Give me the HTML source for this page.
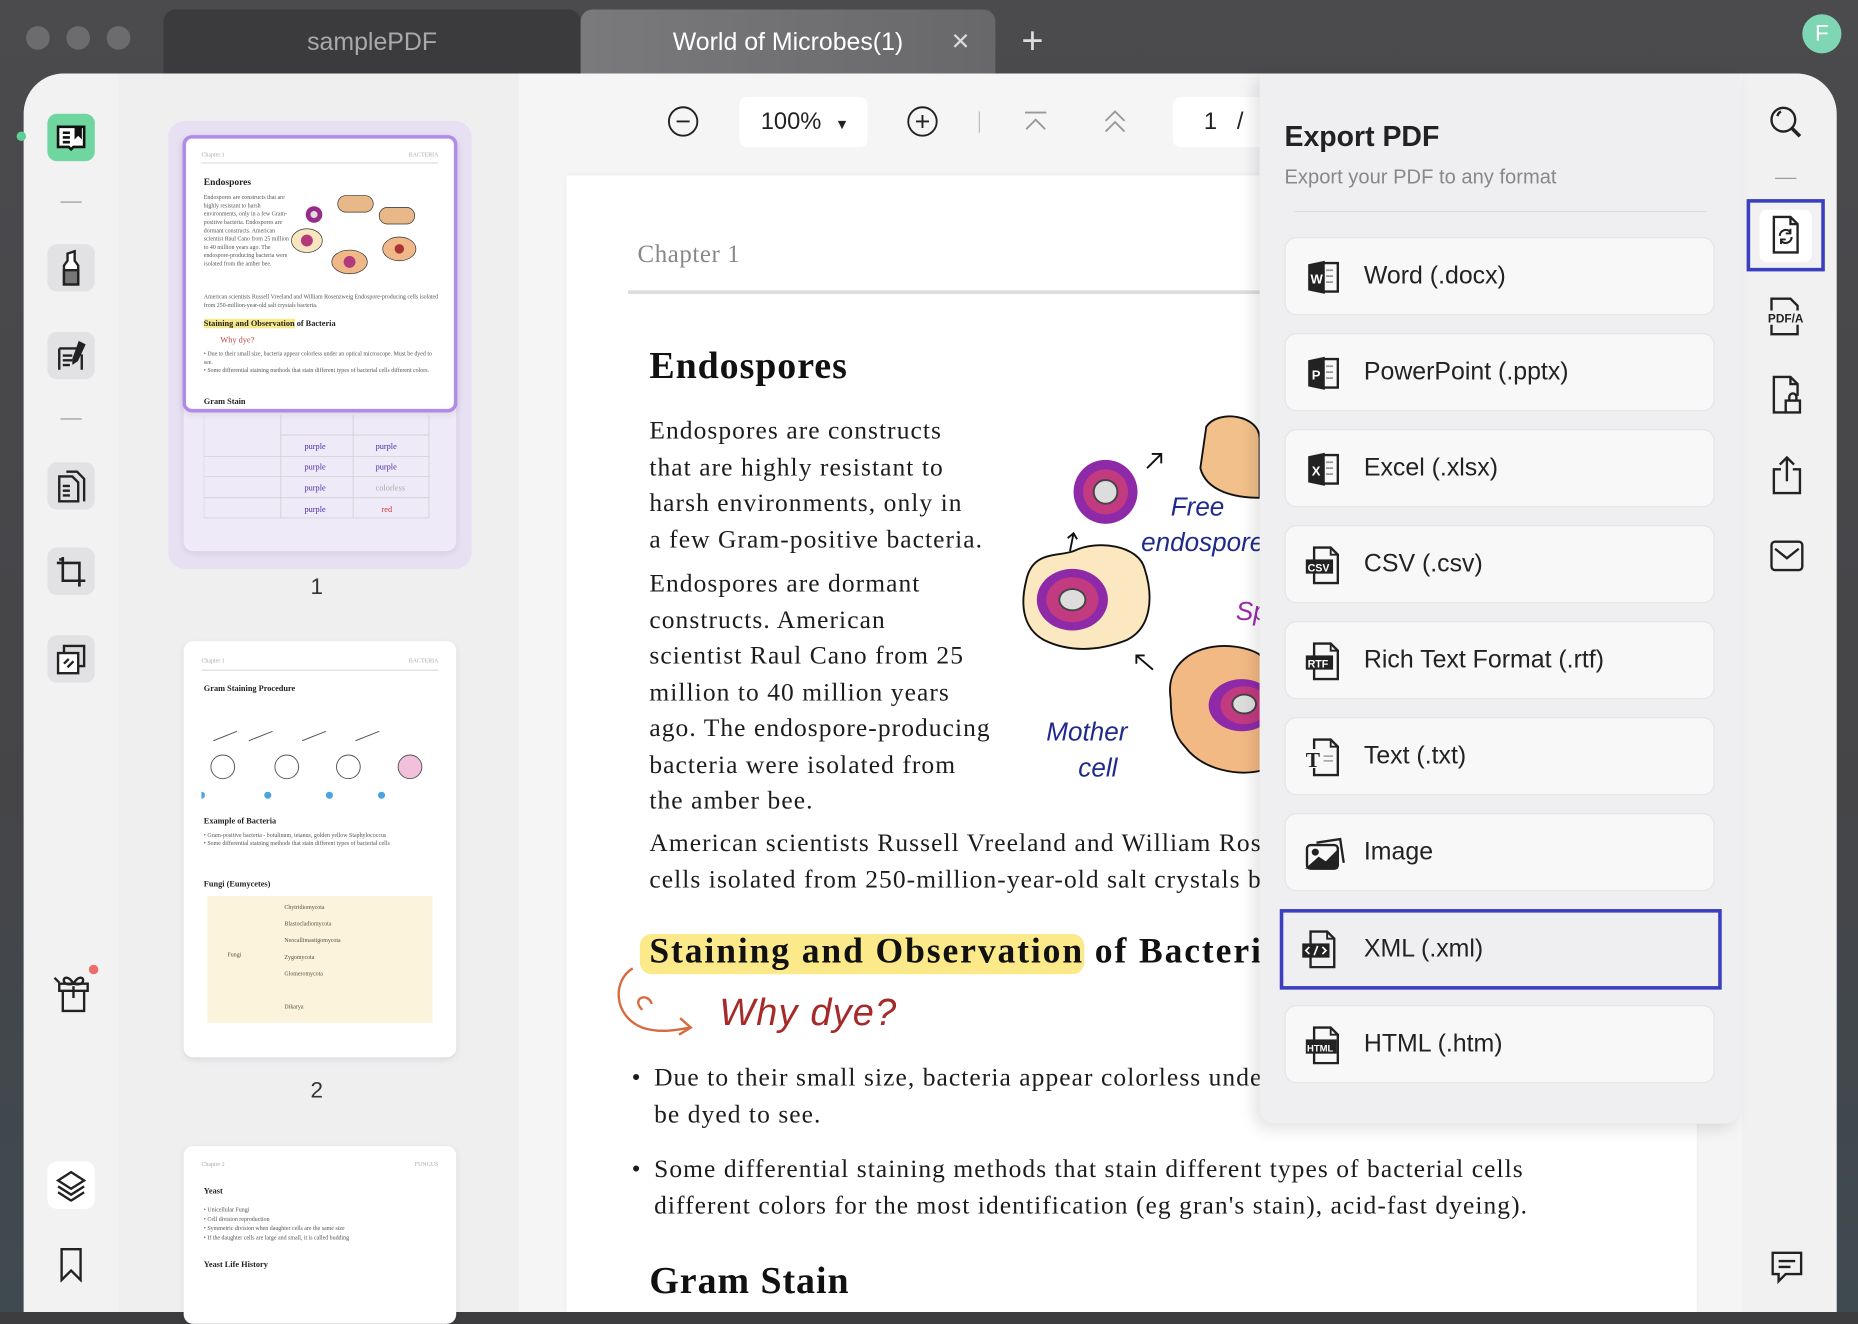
<!DOCTYPE html>
<html><head><meta charset="utf-8"><style>
*{margin:0;padding:0;box-sizing:border-box}
html,body{width:1858px;height:1312px;overflow:hidden;background:#3d3d40}
#w{position:absolute;left:0;top:0;width:1568px;height:1107px;transform:scale(1.18495,1.1852);transform-origin:0 0;font-family:"Liberation Sans",sans-serif;background:linear-gradient(180deg,#4b4a4d 0%,#454548 60%,#3f4a50 100%)}
.a{position:absolute}
.serif{font-family:"Liberation Serif",serif}
.tl{width:20px;height:20px;border-radius:50%;background:#6c6b6e;top:22px}
.ic{position:absolute;width:40px;height:40px;border-radius:8px;background:#e2e2e4;display:flex;align-items:center;justify-content:center}
.btn{position:absolute;left:1084px;width:363px;height:66px;background:#f8f8f9;border:1px solid #e4e3e5;border-radius:10px;font-size:21px;color:#222;line-height:64px;padding-left:66px}
.btn svg{position:absolute;left:16px;top:16px}
.p{position:absolute;left:548px;font-size:21.5px;color:#1c1c1c;line-height:30.5px;font-family:"Liberation Serif",serif;letter-spacing:0.9px}
.thumb{position:absolute;background:#fff;border-radius:8px;box-shadow:0 2px 6px rgba(0,0,0,.08);overflow:hidden}
.tx{position:absolute;font-size:5px;color:#555;font-family:"Liberation Serif",serif;line-height:7px}
.rs{position:absolute;left:1492px}
</style></head><body><div id="w">
<div class="a tl" style="left:22px"></div><div class="a tl" style="left:56px"></div><div class="a tl" style="left:90px"></div>
<div class="a" style="left:138px;top:8px;width:352px;height:60px;background:#3b3b3d;border-radius:10px 10px 0 0"></div>
<div class="a" style="left:138px;top:24px;width:352px;text-align:center;color:#a9a9ab;font-size:21px">samplePDF</div>
<div class="a" style="left:490px;top:8px;width:350px;height:60px;background:linear-gradient(90deg,#7a7a7c,#68686a);border-radius:10px 10px 0 0"></div>
<div class="a" style="left:490px;top:24px;width:350px;text-align:center;color:#fff;font-size:21px">World of Microbes(1)</div>
<div class="a" style="left:803px;top:19px;color:#ddd;font-size:26px;font-weight:300">×</div>
<div class="a" style="left:862px;top:16px;color:#ddd;font-size:32px;font-weight:300">+</div>
<div class="a" style="left:1521px;top:12px;width:33px;height:33px;border-radius:50%;background:#7ed6b4;color:#fff;text-align:center;line-height:33px;font-size:19px">F</div>
<div class="a" style="left:20px;top:62px;width:1530px;height:1045px;background:#f5f5f6;border-radius:34px 34px 0 0;overflow:hidden">
 <div class="a" style="left:0;top:0;width:80px;height:1045px;background:#f2f2f3"></div>
 <div class="a" style="left:80px;top:0;width:338px;height:1045px;background:#efeff0"></div>
 <div class="a" style="left:1450px;top:0;width:80px;height:1045px;background:#f1f1f2"></div>
</div>
<div class="a" style="left:14px;top:111px;width:8px;height:8px;border-radius:50%;background:#5ccf94"></div>
<div class="ic" style="left:40px;top:96px;background:#6fd6a0"><svg width="30" height="30" viewBox="0 0 30 30" fill="none" stroke="#111" stroke-width="2.2"><path d="M4 6h22v17H17l-2 2-2-2H4z" fill="#fff"/><path d="M8 11h6M8 15h6M8 19h6"/><path d="M19 6v8l2-2 2 2V6" fill="#111"/></svg></div>
<div class="a" style="left:51px;top:170px;width:18px;height:1px;background:#999"></div>
<div class="ic" style="left:40px;top:206px"><svg width="28" height="32" viewBox="0 0 28 32" fill="none" stroke="#222" stroke-width="2"><path d="M11 4l6-2v8l3 4v16H8V14l3-4z" fill="#fff"/><path d="M8 18h12v12H8z" fill="#777"/></svg></div>
<div class="ic" style="left:40px;top:280px"><svg width="30" height="30" viewBox="0 0 30 30" fill="none" stroke="#222" stroke-width="2"><path d="M5 9h15M5 9v18M8 15h8M8 19h8M8 23h6"/><path d="M22 4l4 2-6 13-3 2 0-3z" fill="#222"/><path d="M24 14v13"/></svg></div>
<div class="a" style="left:51px;top:353px;width:18px;height:1px;background:#999"></div>
<div class="ic" style="left:40px;top:390px"><svg width="30" height="32" viewBox="0 0 30 32" fill="none" stroke="#222" stroke-width="2"><path d="M5 8h11l5 5v16H5z"/><path d="M11 4h9l6 6v19"/><path d="M8 16h6M8 20h6M8 24h6"/></svg></div>
<div class="ic" style="left:40px;top:462px"><svg width="30" height="30" viewBox="0 0 30 30" fill="none" stroke="#222" stroke-width="2.2"><path d="M8 3v20h19M3 8h19v19"/><path d="M5 5h4M22 25v3"/></svg></div>
<div class="ic" style="left:40px;top:536px"><svg width="30" height="30" viewBox="0 0 30 30" fill="none" stroke="#222" stroke-width="2"><rect x="9" y="4" width="17" height="17" fill="#ddd"/><rect x="4" y="10" width="17" height="17" fill="#fff"/><path d="M9 19l4-4M12 22l5-5"/></svg></div>
<svg class="a" style="left:40px;top:812px" width="44" height="46" viewBox="0 0 44 46" fill="none" stroke="#222" stroke-width="2"><circle cx="39" cy="6" r="4" fill="#ee6b6b" stroke="none"/><path d="M6 13l4 4M10 18h24v6H10zM13 24v17h18V24M22 20v10"/><path d="M22 18c-4-7-9-6-8-2s8 2 8 2c4-7 9-6 8-2s-8 2-8 2"/></svg>
<div class="a" style="left:40px;top:980px;width:40px;height:40px;border-radius:8px;background:#fff"></div>
<svg class="a" style="left:46px;top:986px" width="28" height="28" viewBox="0 0 28 28" fill="none" stroke="#222" stroke-width="2"><path d="M14 3l11 7-11 7-11-7z"/><path d="M3 15l11 7 11-7M3 20l11 7 11-7"/></svg>
<svg class="a" style="left:50px;top:1052px" width="20" height="30" viewBox="0 0 20 30" fill="none" stroke="#222" stroke-width="2"><path d="M2 2h16v26l-8-8-8 8z"/></svg>
<div class="a" style="left:142px;top:102px;width:256px;height:378px;border-radius:14px;background:#e6e0f2"></div>
<div class="thumb" style="left:155px;top:115px;width:230px;height:350px;background:#efeaf8"></div>
<div class="thumb" style="left:154px;top:114px;width:232px;height:234px;border:3px solid #b08be8"></div>
<div class="tx" style="left:170px;top:128px;color:#aaa">Chapter 1</div><div class="tx" style="left:345px;top:128px;color:#aaa">BACTERIA</div>
<div class="a" style="left:170px;top:137px;width:200px;height:1px;background:#ddd"></div>
<div class="tx" style="left:172px;top:150px;font-size:8px;font-weight:bold;color:#222">Endospores</div>
<div class="tx" style="left:172px;top:164px;width:72px">Endospores are constructs that are highly resistant to harsh environments, only in a few Gram-positive bacteria. Endospores are dormant constructs. American scientist Raul Cano from 25 million to 40 million years ago. The endospore-producing bacteria were isolated from the amber bee.</div>
<svg class="a" style="left:245px;top:155px" width="130" height="90"><circle cx="20" cy="26" r="7" fill="#9a2a8a"/><circle cx="20" cy="26" r="3" fill="#ddd"/><ellipse cx="14" cy="48" rx="13" ry="10" fill="#f8e6c0" stroke="#333" stroke-width=".6"/><circle cx="14" cy="48" r="5" fill="#b33a7a"/><rect x="40" y="10" width="30" height="14" rx="7" fill="#e8b888" stroke="#333" stroke-width=".6"/><rect x="75" y="20" width="30" height="14" rx="7" fill="#e8b888" stroke="#333" stroke-width=".6"/><ellipse cx="92" cy="55" rx="14" ry="10" fill="#f0b888" stroke="#333" stroke-width=".6"/><ellipse cx="50" cy="66" rx="15" ry="10" fill="#f0b888" stroke="#333" stroke-width=".6"/><circle cx="50" cy="66" r="5" fill="#b33a7a"/><circle cx="92" cy="55" r="4" fill="#a33"/></svg>
<div class="tx" style="left:172px;top:248px;width:200px">American scientists Russell Vreeland and William Rosenzweig Endospore-producing cells isolated from 250-million-year-old salt crystals bacteria.</div>
<div class="tx" style="left:172px;top:270px;font-size:7px;font-weight:bold;color:#222"><span style="background:#f8e98a">Staining and Observation</span> of Bacteria</div>
<div class="tx" style="left:186px;top:284px;color:#b44;font-size:7px">Why dye?</div>
<div class="tx" style="left:172px;top:296px;width:200px">• Due to their small size, bacteria appear colorless under an optical microscope. Must be dyed to see.<br>• Some differential staining methods that stain different types of bacterial cells different colors.</div>
<div class="tx" style="left:172px;top:336px;font-size:7px;font-weight:bold;color:#222">Gram Stain</div>
<svg class="a" style="left:172px;top:350px" width="195" height="90" fill="none" stroke="#ccc" stroke-width=".6"><path d="M0 0v87M65 0v87M126 0v87M190 0v87M65 17h125M0 35h190M0 52h190M0 70h190M0 87h190"/><g font-size="7" fill="#4b2ca8" stroke="none" font-family="Liberation Serif"><text x="85" y="29">purple</text><text x="145" y="29">purple</text><text x="85" y="46">purple</text><text x="145" y="46">purple</text><text x="85" y="64">purple</text><text x="145" y="64" fill="#aaa">colorless</text><text x="85" y="82">purple</text><text x="150" y="82" fill="#c33">red</text></g></svg>
<div class="a" style="left:262px;top:485px;font-size:19px;color:#333">1</div>
<div class="thumb" style="left:155px;top:541px;width:230px;height:351px"></div>
<div class="tx" style="left:170px;top:555px;color:#aaa">Chapter 1</div><div class="tx" style="left:345px;top:555px;color:#aaa">BACTERIA</div>
<div class="a" style="left:170px;top:565px;width:200px;height:1px;background:#ddd"></div>
<div class="tx" style="left:172px;top:578px;font-size:7px;font-weight:bold;color:#222">Gram Staining Procedure</div>
<svg class="a" style="left:170px;top:595px" width="200" height="85" fill="none" stroke="#555" stroke-width=".8"><g><path d="M10 30l20-8M40 30l20-8M85 30l20-8M130 30l20-8"/><circle cx="18" cy="52" r="10"/><circle cx="72" cy="52" r="10"/><circle cx="124" cy="52" r="10"/><circle cx="176" cy="52" r="10" fill="#f3c0dc"/><circle cx="0" cy="76" r="3" fill="#4aa4e0" stroke="none"/><circle cx="56" cy="76" r="3" fill="#4aa4e0" stroke="none"/><circle cx="108" cy="76" r="3" fill="#4aa4e0" stroke="none"/><circle cx="152" cy="76" r="3" fill="#4aa4e0" stroke="none"/></g></svg>
<div class="tx" style="left:172px;top:690px;font-size:7px;font-weight:bold;color:#222">Example of Bacteria</div>
<div class="tx" style="left:172px;top:702px;width:200px">• Gram-positive bacteria - botulinum, tetanus, golden yellow Staphylococcus<br>• Some differential staining methods that stain different types of bacterial cells</div>
<div class="tx" style="left:172px;top:743px;font-size:7px;font-weight:bold;color:#222">Fungi (Eumycetes)</div>
<div class="a" style="left:175px;top:756px;width:190px;height:107px;background:#fbf3dc"></div>
<div class="tx" style="left:192px;top:803px;color:#553">Fungi</div>
<div class="tx" style="left:240px;top:760px;color:#553;line-height:14px">Chytridiomycota<br>Blastocladiomycota<br>Neocallimastigomycota<br>Zygomycota<br>Glomeromycota<br><br>Dikarya</div>
<div class="a" style="left:262px;top:910px;font-size:19px;color:#333">2</div>
<div class="thumb" style="left:155px;top:967px;width:230px;height:150px"></div>
<div class="tx" style="left:170px;top:980px;color:#aaa">Chapter 2</div><div class="tx" style="left:350px;top:980px;color:#aaa">FUNGUS</div>
<div class="tx" style="left:172px;top:1002px;font-size:7px;font-weight:bold;color:#222">Yeast</div>
<div class="tx" style="left:172px;top:1018px;width:200px;line-height:8px">• Unicellular Fungi<br>• Cell division reproduction<br>• Symmetric division when daughter cells are the same size<br>• If the daughter cells are large and small, it is called budding</div>
<div class="tx" style="left:172px;top:1064px;font-size:7px;font-weight:bold;color:#222">Yeast Life History</div>
<svg class="a" style="left:563px;top:89px" width="27" height="27" fill="none" stroke="#222" stroke-width="1.6"><circle cx="13.5" cy="13.5" r="12"/><path d="M8 13.5h11"/></svg>
<div class="a" style="left:624px;top:82px;width:108px;height:42px;background:#fff;border-radius:6px;font-size:20px;color:#222;line-height:42px;padding-left:18px">100% <span style="font-size:12px;margin-left:6px">▼</span></div>
<svg class="a" style="left:765px;top:89px" width="27" height="27" fill="none" stroke="#222" stroke-width="1.6"><circle cx="13.5" cy="13.5" r="12"/><path d="M8 13.5h11M13.5 8v11"/></svg>
<div class="a" style="left:826px;top:94px;width:1px;height:18px;background:#bbb"></div>
<svg class="a" style="left:863px;top:93px" width="22" height="20" fill="none" stroke="#999" stroke-width="1.6"><path d="M2 2h18M3 16l8-8 8 8"/></svg>
<svg class="a" style="left:930px;top:92px" width="22" height="22" fill="none" stroke="#999" stroke-width="1.6"><path d="M3 10l8-8 8 8M3 19l8-8 8 8"/></svg>
<div class="a" style="left:990px;top:82px;width:80px;height:42px;background:#fff;border-radius:6px;font-size:20px;color:#222;line-height:42px;padding-left:26px">1 &nbsp;&nbsp;/</div>
<div class="a" style="left:478px;top:148px;width:954px;height:959px;background:#fff;box-shadow:0 0 4px rgba(0,0,0,.06)"></div>
<div class="a serif" style="left:538px;top:202px;font-size:21px;color:#888;letter-spacing:0.5px">Chapter 1</div>
<div class="a" style="left:530px;top:245px;width:540px;height:3px;background:#ddd"></div>
<div class="a serif" style="left:548px;top:290px;font-size:32px;font-weight:bold;color:#111;letter-spacing:0.8px">Endospores</div>
<div class="p" style="top:348px">Endospores are constructs<br>that are highly resistant to<br>harsh environments, only in<br>a few Gram-positive bacteria.</div>
<div class="p" style="top:477px">Endospores are dormant<br>constructs. American<br>scientist Raul Cano from 25<br>million to 40 million years<br>ago. The endospore-producing<br>bacteria were isolated from<br>the amber bee.</div>
<div class="p" style="top:696px;white-space:nowrap">American scientists Russell Vreeland and William Rosenzweig<br>cells isolated from 250-million-year-old salt crystals bacteria</div>
<svg class="a" style="left:858px;top:340px" width="210" height="325" fill="none" stroke="#111" stroke-width="1.6">
<path d="M160 20c10-15 45-10 45 10v50c-20 0-45-5-50-25z" fill="#f2c08a"/>
<circle cx="75" cy="75" r="27" fill="#8e2aa8" stroke="none"/><circle cx="75" cy="75" r="19" fill="#c23a80" stroke="none"/><circle cx="75" cy="75" r="10" fill="#ddd" stroke="#444"/>
<path d="M8 150c5-25 25-20 40-25 20-10 55-5 60 15 8 25 5 50-15 60-25 10-50 10-70 0C5 190 3 170 8 150z" fill="#fbe7c0"/>
<ellipse cx="47" cy="166" rx="30" ry="26" fill="#8e2aa8" stroke="none"/><ellipse cx="47" cy="166" rx="22" ry="19" fill="#c23a80" stroke="none"/><ellipse cx="47" cy="166" rx="11" ry="9" fill="#ddd" stroke="#444"/>
<path d="M130 250c-5-30 20-45 45-45 15 0 30 5 32 10v95c-20 5-50 0-65-20-10-10-12-25-12-40z" fill="#f2b984"/>
<ellipse cx="190" cy="255" rx="28" ry="22" fill="#8e2aa8" stroke="none"/><ellipse cx="192" cy="255" rx="20" ry="16" fill="#c23a80" stroke="none"/><ellipse cx="192" cy="254" rx="10" ry="8" fill="#ddd" stroke="#444"/>
<path d="M110 55l12-12m-8 0h8v8M45 125l3-15m-5 4l5-4 3 5M115 225l-14-12m0 7v-7h7"/>
<g font-family="'Liberation Sans',sans-serif" font-style="italic" stroke="none" fill="#1f2a8a" font-size="22"><text x="130" y="95">Free</text><text x="105" y="125">endospore</text><text x="25" y="285">Mother</text><text x="52" y="315">cell</text><text x="185" y="183" fill="#9a2aa8">Sp</text></g></svg>
<div class="a" style="left:540px;top:788px;width:375px;height:34px;background:#fbe98a;border-radius:10px"></div>
<div class="a serif" style="left:548px;top:786px;font-size:30px;font-weight:bold;color:#111;white-space:nowrap;letter-spacing:1.6px">Staining and Observation of Bacteria</div>
<svg class="a" style="left:512px;top:812px" width="80" height="70" fill="none" stroke="#d86a40" stroke-width="2"><path d="M22 5C5 15 5 45 30 55c15 5 30 2 40 0m-8-8l9 8-10 6"/><path d="M30 40c-10-10 5-15 8-5"/></svg>
<div class="a" style="left:607px;top:836px;font-size:32px;color:#a52a2a;font-style:italic;font-family:'Liberation Sans',sans-serif;letter-spacing:1px">Why dye?</div>
<div class="p" style="left:533px;top:894px">•</div><div class="p" style="left:552px;top:894px;white-space:nowrap">Due to their small size, bacteria appear colorless under an optical microscope. Must<br>be dyed to see.</div>
<div class="p" style="left:533px;top:971px">•</div><div class="p" style="left:552px;top:971px;white-space:nowrap">Some differential staining methods that stain different types of bacterial cells<br>different colors for the most identification (eg gran's stain), acid-fast dyeing).</div>
<div class="a serif" style="left:548px;top:1062px;font-size:32px;font-weight:bold;color:#111;letter-spacing:0.8px">Gram Stain</div>
<div class="a" style="left:1063px;top:62px;width:405px;height:886px;background:#efeef0;border-radius:0 0 12px 12px;box-shadow:-4px 4px 14px rgba(0,0,0,.12)"></div>
<div class="a" style="left:1084px;top:102px;font-size:24px;font-weight:bold;color:#222">Export PDF</div>
<div class="a" style="left:1084px;top:140px;font-size:17px;color:#888">Export your PDF to any format</div>
<div class="a" style="left:1092px;top:178px;width:348px;height:1px;background:#dcdcde"></div>
<div class="btn" style="top:200px"><svg width="32" height="34" viewBox="0 0 32 34"><path d="M14 5h14v24H14" fill="none" stroke="#222" stroke-width="2"/><path d="M18 11h6M18 16h6M18 21h6" stroke="#999" stroke-width="1.5"/><path d="M3 6l14-3v28L3 28z" fill="#222"/><text x="5" y="22" font-size="11" font-weight="bold" fill="#fff" font-family="Liberation Sans">W</text></svg>Word (.docx)</div>
<div class="btn" style="top:281px"><svg width="32" height="34" viewBox="0 0 32 34"><path d="M14 5h14v24H14" fill="none" stroke="#222" stroke-width="2"/><path d="M18 11h6M18 16h6M18 21h6" stroke="#999" stroke-width="1.5"/><path d="M3 6l14-3v28L3 28z" fill="#222"/><text x="6" y="22" font-size="11" font-weight="bold" fill="#fff" font-family="Liberation Sans">P</text></svg>PowerPoint (.pptx)</div>
<div class="btn" style="top:362px"><svg width="32" height="34" viewBox="0 0 32 34"><path d="M14 5h14v24H14" fill="none" stroke="#222" stroke-width="2"/><path d="M18 11h6M18 16h6M18 21h6" stroke="#999" stroke-width="1.5"/><path d="M3 6l14-3v28L3 28z" fill="#222"/><text x="6" y="22" font-size="11" font-weight="bold" fill="#fff" font-family="Liberation Sans">X</text></svg>Excel (.xlsx)</div>
<div class="btn" style="top:443px"><svg width="34" height="34" viewBox="0 0 34 34"><path d="M8 2h14l6 6v24H8z" fill="none" stroke="#222" stroke-width="2"/><path d="M22 2v6h6" fill="none" stroke="#222" stroke-width="1.6"/><rect x="1" y="12" width="23" height="12" fill="#222"/><text x="2.5" y="22" font-size="9" font-weight="bold" fill="#fff" font-family="Liberation Sans">CSV</text></svg>CSV (.csv)</div>
<div class="btn" style="top:524px"><svg width="34" height="34" viewBox="0 0 34 34"><path d="M8 2h14l6 6v24H8z" fill="none" stroke="#222" stroke-width="2"/><path d="M22 2v6h6" fill="none" stroke="#222" stroke-width="1.6"/><rect x="1" y="12" width="23" height="12" fill="#222"/><text x="2.5" y="22" font-size="9" font-weight="bold" fill="#fff" font-family="Liberation Sans">RTF</text></svg>Rich Text Format (.rtf)</div>
<div class="btn" style="top:605px"><svg width="34" height="34" viewBox="0 0 34 34"><path d="M8 2h14l6 6v24H8z" fill="none" stroke="#222" stroke-width="2"/><path d="M22 2v6h6" fill="none" stroke="#222" stroke-width="1.6"/><rect x="1" y="10" width="14" height="16" fill="#f8f8f9"/><text x="1" y="25" font-size="18" font-weight="bold" fill="#222" font-family="Liberation Serif">T</text><path d="M16 16h8M16 20h8" stroke="#aaa" stroke-width="1.5"/></svg>Text (.txt)</div>
<div class="btn" style="top:686px"><svg width="36" height="34" viewBox="0 0 36 34" fill="none" stroke="#222" stroke-width="2"><path d="M10 8l20-3 3 20" /><rect x="2" y="10" width="26" height="20" rx="3"/><circle cx="9" cy="16" r="2" fill="#222"/><path d="M3 29l9-8 6 4 9-9v13z" fill="#222"/></svg>Image</div>
<div class="btn" style="top:767px;left:1080px;width:373px;height:68px;border:3px solid #3b3fbf;border-radius:0;background:#efeef0;padding-left:68px;line-height:62px"><svg width="34" height="34" viewBox="0 0 34 34" style="left:15px;top:14px"><path d="M8 2h14l6 6v24H8z" fill="none" stroke="#222" stroke-width="2"/><path d="M22 2v6h6" fill="none" stroke="#222" stroke-width="1.6"/><rect x="1" y="12" width="23" height="12" fill="#222"/><path d="M7 15l-3 3 3 3M18 15l3 3-3 3M14 14l-3 8" stroke="#fff" stroke-width="1.4" fill="none"/></svg>XML (.xml)</div>
<div class="btn" style="top:848px"><svg width="34" height="34" viewBox="0 0 34 34"><path d="M8 2h14l6 6v24H8z" fill="none" stroke="#222" stroke-width="2"/><path d="M22 2v6h6" fill="none" stroke="#222" stroke-width="1.6"/><rect x="1" y="12" width="26" height="12" fill="#222"/><text x="2" y="22" font-size="8" font-weight="bold" fill="#fff" font-family="Liberation Sans">HTML</text></svg>HTML (.htm)</div>
<svg class="rs" style="top:88px" width="30" height="30" fill="none" stroke="#222" stroke-width="2"><circle cx="13" cy="13" r="10"/><path d="M20 20l7 7" stroke-width="3"/><path d="M8 10a6 6 0 0 1 3-4"/></svg>
<div class="a" style="left:1498px;top:150px;width:18px;height:1px;background:#999"></div>
<div class="a" style="left:1474px;top:168px;width:66px;height:61px;border:3px solid #3b3fbf"></div>
<div class="a" style="left:1485px;top:177px;width:44px;height:44px;background:#fff;border-radius:6px"></div>
<svg class="rs" style="top:181px;left:1494px" width="26" height="34" fill="none" stroke="#222" stroke-width="2"><path d="M3 2h14l6 6v24H3z"/><path d="M17 2v6h6"/><path d="M8 18a5 5 0 0 1 9-3m1 4a5 5 0 0 1-9 3" stroke-width="1.8"/><path d="M17 12v4h-4M9 25v-4h4" stroke-width="1.6"/></svg>
<svg class="rs" style="top:250px;left:1490px" width="36" height="34" fill="none" stroke="#222" stroke-width="2"><path d="M5 12V2h16l6 6v4M5 24v8h22v-8"/><text x="2" y="22" font-size="10" font-weight="bold" fill="#222" stroke="none" font-family="Liberation Sans">PDF/A</text></svg>
<svg class="rs" style="top:316px;left:1494px" width="28" height="36" fill="none" stroke="#222" stroke-width="2"><path d="M13 32H3V2h14l6 6v10"/><path d="M17 2v6h6"/><rect x="13" y="22" width="12" height="10"/><path d="M16 22v-3a3 3 0 0 1 6 0v3"/></svg>
<svg class="rs" style="top:384px;left:1494px" width="28" height="34" fill="none" stroke="#222" stroke-width="2"><path d="M9 12H3v20h22V12h-6M14 22V2M8 8l6-6 6 6"/></svg>
<svg class="rs" style="top:455px;left:1493px" width="30" height="28" fill="none" stroke="#222" stroke-width="2"><rect x="2" y="2" width="26" height="24" rx="3"/><path d="M5 8l10 8 10-8"/></svg>
<svg class="rs" style="top:1054px;left:1493px" width="30" height="30" fill="none" stroke="#222" stroke-width="2"><path d="M3 3h24v18H14l-6 6v-6H3z"/><path d="M8 10h14M8 15h10"/></svg>
</div></body></html>
